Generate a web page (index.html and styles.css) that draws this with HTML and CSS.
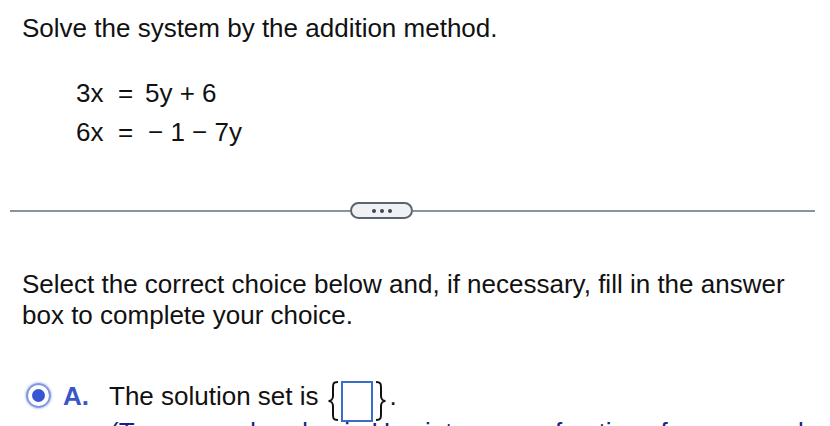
FILE: index.html
```html
<!DOCTYPE html>
<html>
<head>
<meta charset="utf-8">
<link rel="stylesheet" href="styles.css">
</head>
<body>
<div class="page">
  <div class="top">
    <p class="title">Solve the system by the addition method.</p>
    <div class="eqs">
      <span class="lhs">3x</span><span class="eq">=</span><span class="rhs">5y + 6</span>
      <span class="lhs">6x</span><span class="eq">=</span><span class="rhs rhs2">− 1 − 7y</span>
    </div>
  </div>
  <div class="sep">
    <div class="rule rule-left"></div>
    <div class="pill"><span class="dot"></span><span class="dot"></span><span class="dot"></span></div>
    <div class="rule"></div>
  </div>
  <div class="bottom">
    <p class="prompt">Select the correct choice below and, if necessary, fill in the answer box to complete your choice.</p>
    <div class="choice">
      <span class="radio"><span class="radio-dot"></span></span>
      <span class="letter">A.</span>
      <div class="choice-body">
        <div class="answer-line">
          <span>The solution set is</span>
          <span class="set">
            <svg class="brace" width="13" height="42" viewBox="0 0 13 42"><path d="M11 2 C6 2 6 4 6 8 L6 16 C6 19 4 21 1.5 21 C4 21 6 23 6 26 L6 34 C6 38 6 40 11 40" fill="none" stroke="#111" stroke-width="2"/></svg>
            <span class="box"></span>
            <svg class="brace" width="13" height="42" viewBox="0 0 13 42"><path d="M2 2 C7 2 7 4 7 8 L7 16 C7 19 9 21 11.5 21 C9 21 7 23 7 26 L7 34 C7 38 7 40 2 40" fill="none" stroke="#111" stroke-width="2"/></svg>
          </span>
          <span class="period">.</span>
        </div>
        <p class="hint">(Type an ordered pair. Use integers or fractions for any numbers in the expression.)</p>
      </div>
    </div>
  </div>
</div>
</body>
</html>
```
FILE: styles.css
```css
html, body {
  margin: 0;
  padding: 0;
  background: #ffffff;
}
body {
  font-family: "Liberation Sans", Arial, sans-serif;
  font-size: 26px;
  color: #111111;
  overflow: hidden;
}
.page {
  width: 830px;
  height: 426px;
  overflow: hidden;
}
.top {
  padding: 13px 0 0 22px;
}
.title {
  margin: 0;
  line-height: 30px;
}
.eqs {
  display: grid;
  grid-template-columns: 42px 27px auto;
  margin: 31px 0 0 54px;
  line-height: 39px;
  width: max-content;
}
.rhs2 {
  padding-left: 3px;
}
.sep {
  display: flex;
  align-items: center;
  margin: 50px 0 0 10px;
  width: 805px;
  height: 17px;
}
.rule {
  flex: 1;
  height: 2px;
  background: #8a929e;
}
.rule-left {
  flex: none;
  width: 340px;
}
.pill {
  width: 59px;
  height: 13px;
  border: 2px solid #596470;
  border-radius: 9px;
  background: #eff1f4;
  display: flex;
  justify-content: center;
  align-items: center;
  gap: 4px;
}
.dot {
  width: 4px;
  height: 4px;
  border-radius: 50%;
  background: #3f4852;
}
.bottom {
  padding: 0 0 0 22px;
}
.prompt {
  margin: 50px 0 0 0;
  line-height: 31px;
  width: 780px;
}
.choice {
  display: flex;
  align-items: flex-start;
  margin-top: 50px;
}
.radio {
  width: 21px;
  height: 21px;
  border-radius: 50%;
  border: 2px solid #7f97e0;
  box-shadow: 0 0 2px 1px #c9d4f4;
  display: flex;
  justify-content: center;
  align-items: center;
  margin: 2px 0 0 4px;
  flex: none;
}
.radio-dot {
  width: 13px;
  height: 13px;
  border-radius: 50%;
  background: #3656d4;
}
.letter {
  color: #3a55c8;
  font-weight: bold;
  margin-left: 12px;
  width: 46px;
  line-height: 30px;
  flex: none;
}
.choice-body {
  display: flex;
  flex-direction: column;
}
.answer-line {
  display: flex;
  align-items: center;
  height: 30px;
  line-height: 30px;
}
.set {
  display: flex;
  align-items: center;
  margin-left: 8px;
  margin-top: 10px;
}
.brace {
  display: block;
}
.box {
  width: 32px;
  height: 41px;
  border: 2px solid #3a6ccc;
  margin: 0 1px;
  box-sizing: border-box;
}
.period {
  margin-left: 3px;
}
.hint {
  margin: 6px 0 0 1px;
  color: #1e1e86;
  line-height: 30px;
  white-space: nowrap;
}
```
